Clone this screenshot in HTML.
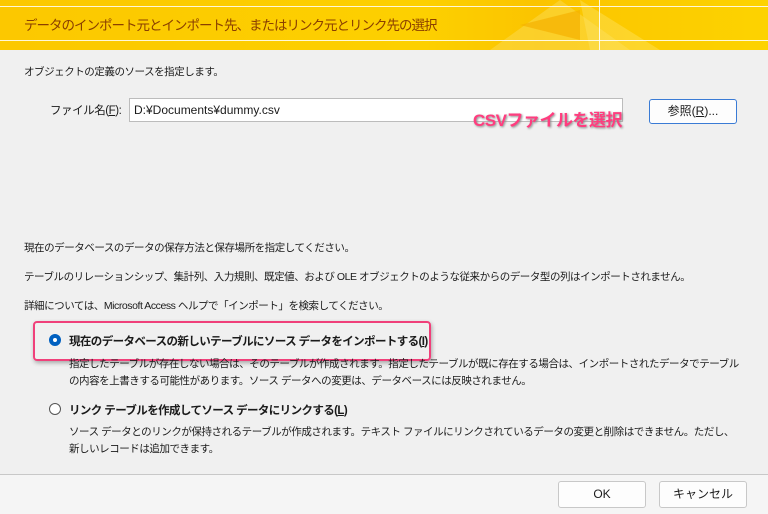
<!DOCTYPE html>
<html><head><meta charset="utf-8"><style>
*{margin:0;padding:0;box-sizing:border-box}
body{width:768px;height:514px;overflow:hidden;background:#f0f0f0;font-family:"Liberation Sans","Noto Sans CJK JP",sans-serif;color:#1a1a1a;position:relative;font-size:10.5px;letter-spacing:-0.45px}
.hdr{position:absolute;left:0;top:0;width:768px;height:50px;background:linear-gradient(90deg,#fcc800 0%,#fdd000 55%,#fbc400 70%,#fdd300 100%);overflow:hidden}
.hdr .t{position:absolute;left:24px;top:14px;font-size:13.5px;color:#8a3f00;letter-spacing:-1px}
.ln{position:absolute;background:rgba(255,255,255,.85)}
.a{position:absolute}
.inp{position:absolute;left:129px;top:98px;width:494px;height:24px;background:#fff;border:1px solid #bcbcbc;padding:4px 4px;font-size:12px;letter-spacing:0}
.btn{position:absolute;background:#fdfdfd;border:1px solid #c8c8c8;border-radius:3px;text-align:center;font-size:12px;letter-spacing:0}
.rad{position:absolute;width:12px;height:12px;border-radius:50%;border:1px solid #555;background:#fff}
</style></head><body>
<div class="hdr">
<svg class="a" style="left:430px;top:0" width="260" height="50"><polygon points="60,50 130,0 200,50" fill="#fbd84a" opacity=".55"/><polygon points="90,25 150,10 150,40" fill="#f5b000" opacity=".7"/><polygon points="150,0 230,50 160,50" fill="#ffe56a" opacity=".4"/></svg>
<div class="ln" style="left:0;top:6px;width:768px;height:1px"></div>
<div class="ln" style="left:0;top:40px;width:768px;height:1px"></div>
<div class="ln" style="left:599px;top:0;width:1px;height:50px"></div>
<div class="t">データのインポート元とインポート先、またはリンク元とリンク先の選択</div>
</div>
<div class="a" style="left:24px;top:64px">オブジェクトの定義のソースを指定します。</div>
<div class="a" style="left:50px;top:102px;font-size:11.5px">ファイル名(<u>F</u>):</div>
<div class="inp">D:¥Documents¥dummy.csv</div>
<div class="a" style="left:473px;top:106px;font-size:17px;font-weight:bold;color:#ff3d7f;text-shadow:1px 1px 2px #888;letter-spacing:-0.5px">CSVファイルを選択</div>
<div class="btn" style="left:649px;top:99px;width:88px;height:25px;line-height:23px;border-color:#3a7bd5">参照(<u>R</u>)...</div>
<div class="a" style="left:24px;top:240px">現在のデータベースのデータの保存方法と保存場所を指定してください。</div>
<div class="a" style="left:24px;top:269px">テーブルのリレーションシップ、集計列、入力規則、既定値、および OLE オブジェクトのような従来からのデータ型の列はインポートされません。</div>
<div class="a" style="left:24px;top:298px">詳細については、Microsoft Access ヘルプで「インポート」を検索してください。</div>
<div class="a" style="left:33px;top:321px;width:398px;height:40px;border:2.5px solid #f0407a;border-radius:4px;box-shadow:1px 2px 4px rgba(0,0,0,.3)"></div>
<div class="rad" style="left:49px;top:334px;border:4px solid #0060c0"></div>
<div class="a" style="left:69px;top:333px;font-weight:bold;font-size:11.5px;letter-spacing:-0.6px">現在のデータベースの新しいテーブルにソース データをインポートする(<u>I</u>)</div>
<div class="a" style="left:69px;top:356px;width:675px;line-height:17px">指定したテーブルが存在しない場合は、そのテーブルが作成されます。指定したテーブルが既に存在する場合は、インポートされたデータでテーブルの内容を上書きする可能性があります。ソース データへの変更は、データベースには反映されません。</div>
<div class="rad" style="left:49px;top:403px"></div>
<div class="a" style="left:69px;top:402px;font-weight:bold;font-size:11.5px;letter-spacing:-0.6px">リンク テーブルを作成してソース データにリンクする(<u>L</u>)</div>
<div class="a" style="left:69px;top:424px;width:675px;line-height:17px">ソース データとのリンクが保持されるテーブルが作成されます。テキスト ファイルにリンクされているデータの変更と削除はできません。ただし、新しいレコードは追加できます。</div>
<div class="a" style="left:0;top:474px;width:768px;height:40px;background:#f5f5f5;border-top:1px solid #c8c8c8"></div>
<div class="btn" style="left:558px;top:481px;width:88px;height:27px;line-height:25px">OK</div>
<div class="btn" style="left:659px;top:481px;width:88px;height:27px;line-height:25px">キャンセル</div>
</body></html>
